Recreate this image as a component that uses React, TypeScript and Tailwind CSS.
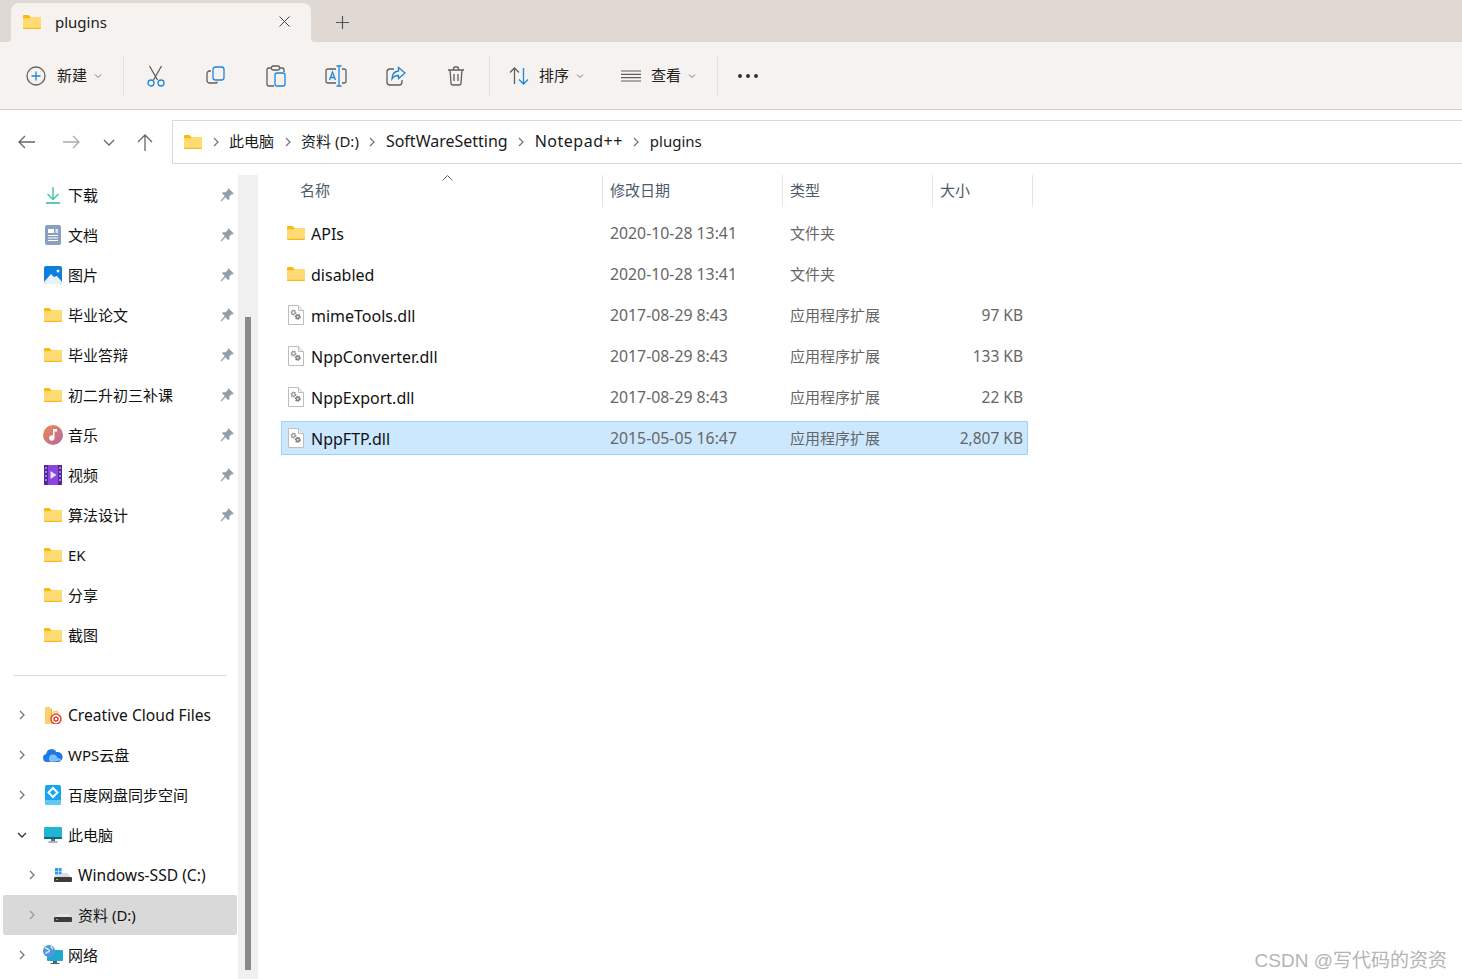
import { ReactNode } from "react"

const font = "font-['Noto_Sans','Noto_Sans_CJK_SC',sans-serif]"

// 文件夹图标
function FolderIcon() {
  return (
    <svg width="18" height="14" viewBox="0 0 18 14" className="shrink-0">
      <path d="M0 1.2C0 .5.5 0 1.2 0h4.2l2 2h9.4c.7 0 1.2.5 1.2 1.2V6H0z" fill="#ffb70f" />
      <path d="M0 3.2h6.6l1.4-1.2h8.8c.7 0 1.2.5 1.2 1.2v9.6c0 .7-.5 1.2-1.2 1.2H1.2C.5 14 0 13.500 0 12.800z" fill="#ffdc73" />
      <path d="M0 12.800V12.900C0 13.500.5 14 1.200 14h15.600c.7 0 1.200-.5 1.200-1.100v-.1z" fill="#f9b81d" />
    </svg>
  )
}

function DllIcon() {
  return (
    <svg width="16" height="20" viewBox="0 0 16 20" className="shrink-0">
      <path d="M.5.500h10l5 5v14H.500z" fill="#fff" stroke="#bdbdbd" />
      <path d="M10.500.500v5h5" fill="#efefef" stroke="#bdbdbd" />
      <circle cx="5.500" cy="7.500" r="2.200" fill="#c4c4c4" stroke="#909090" strokeWidth="1.400" strokeDasharray="1.400 .6" />
      <circle cx="5.500" cy="7.500" r=".8" fill="#fff" />
      <circle cx="9.800" cy="11.800" r="2.200" fill="#9a9a9a" stroke="#6c6c6c" strokeWidth="1.400" strokeDasharray="1.400 .6" />
      <circle cx="9.800" cy="11.800" r=".8" fill="#fff" />
    </svg>
  )
}

function PinIcon() {
  return (
    <svg width="14" height="14" viewBox="0 0 14 14">
      <path d="M8.500.300l5.200 5.200-1.100 1-.9-.3-2.400 2.400.1 2.500-1.100 1.100-2.800-2.900L1.300 13.500l-.8-.8 4.300-4.600L1.900 5.300l1.100-1.100 2.500.1 2.400-2.400-.4-.9z" fill="#949ea6" />
    </svg>
  )
}

function Chevron({ open, muted }: { open?: boolean; muted?: boolean }) {
  return (
    <svg width="10" height="10" viewBox="0 0 10 10" fill="none" stroke={open ? "#333" : muted ? "#999" : "#777"} strokeWidth="1.300">
      {open ? <path d="M1 3l4 4 4-4" /> : <path d="M3 1l4 4-4 4" />}
    </svg>
  )
}

function SmallCaret() {
  return (
    <svg width="8" height="6" viewBox="0 0 8 6" fill="none" stroke="#777" className="mt-px">
      <path d="M1 1.500l3 3 3-3" />
    </svg>
  )
}

function Separator() {
  return <div className="w-px h-10 bg-[#e3e0dd] shrink-0" />
}

const blue = "#1b86dc"
const dark = "#5f5f5f"

const toolIcons: ReactNode[] = [
  <svg key="cut" width="20" height="22" viewBox="0 0 20 22" fill="none" strokeWidth="1.300">
    <path d="M3.500 1l8 14M15.500 1l-8 14" stroke={dark} />
    <circle cx="5" cy="18" r="3" stroke={blue} />
    <circle cx="15" cy="18" r="3" stroke={blue} />
  </svg>,
  <svg key="copy" width="20" height="20" viewBox="0 0 20 20" fill="none" strokeWidth="1.300">
    <path d="M5 5H3.500A2.500 2.500 0 0 0 1 7.500v7A2.500 2.500 0 0 0 3.500 17h6a2.500 2.500 0 0 0 2-1" stroke={dark} />
    <rect x="7" y="1" width="11" height="13" rx="2.500" stroke={blue} />
  </svg>,
  <svg key="paste" width="20" height="22" viewBox="0 0 20 22" fill="none" strokeWidth="1.300">
    <path d="M5 3H3a2 2 0 0 0-2 2v14a2 2 0 0 0 2 2h5M14 3h2a2 2 0 0 1 2 2v2" stroke={dark} />
    <rect x="5.500" y="1" width="8" height="4" rx="1.500" stroke={dark} />
    <rect x="9" y="8" width="10" height="13" rx="2" stroke={blue} />
  </svg>,
  <svg key="rename" width="22" height="22" viewBox="0 0 22 22" fill="none" strokeWidth="1.300">
    <path d="M11 4H3a2 2 0 0 0-2 2v10a2 2 0 0 0 2 2h8M17 4h2a2 2 0 0 1 2 2v10a2 2 0 0 1-2 2h-2" stroke={dark} />
    <path d="M11.500 1h5M14 1v20M11.500 21h5M4.500 15l3-8 3 8M5.500 12.500h4" stroke={blue} />
  </svg>,
  <svg key="share" width="20" height="20" viewBox="0 0 20 20" fill="none" strokeWidth="1.300">
    <path d="M8 3H4a3 3 0 0 0-3 3v10a3 3 0 0 0 3 3h9a3 3 0 0 0 3-3v-2" stroke={dark} />
    <path d="M12.500 1.500L19 7l-6.500 5.500V9.500c-3 0-5 1-6.500 3.500 0-5 2.500-7.500 6.500-8z" stroke={blue} />
  </svg>,
  <svg key="delete" width="18" height="20" viewBox="0 0 18 20" fill="none" stroke={dark} strokeWidth="1.300">
    <path d="M1 4h16M6.500 4V2.500a1.500 1.500 0 0 1 1.500-1.500h2a1.500 1.500 0 0 1 1.500 1.500V4M3 4l1 13a2 2 0 0 0 2 2h6a2 2 0 0 0 2-2l1-13M7 8v7M11 8v7" />
  </svg>,
]

const nav: { label: string; icon: ReactNode; pin?: boolean }[] = [
  {
    label: "下载",
    pin: true,
    icon: (
      <svg width="18" height="18" viewBox="0 0 18 18" fill="none" strokeWidth="1.400">
        <path d="M9 1v12M3.500 8l5.500 5.500L14.500 8" stroke="#3fc7a5" />
        <path d="M2 17h14" stroke="#35b8b0" strokeWidth="1.600" />
      </svg>
    ),
  },
  {
    label: "文档",
    pin: true,
    icon: (
      <svg width="16" height="20" viewBox="0 0 16 20">
        <rect width="16" height="20" rx="2" fill="#8aa0bf" />
        <path d="M3 4h6v4H3zM3 10h10v1H3zM3 12.500h10v1H3zM3 15h10v1H3z" fill="#fff" />
        <path d="M10.500 4H13v4h-2.500z" fill="#dfe6f0" />
      </svg>
    ),
  },
  {
    label: "图片",
    pin: true,
    icon: (
      <svg width="18" height="18" viewBox="0 0 18 18">
        <rect width="18" height="18" rx="2" fill="#0f7fdc" />
        <path d="M0 16l7-8 3 3 3-1 5 6v0a2 2 0 0 1-2 2H2a2 2 0 0 1-2-2z" fill="#e8f3fc" />
        <circle cx="14" cy="5" r="1.500" fill="#e8f3fc" />
      </svg>
    ),
  },
  { label: "毕业论文", pin: true, icon: <FolderIcon /> },
  { label: "毕业答辩", pin: true, icon: <FolderIcon /> },
  { label: "初二升初三补课", pin: true, icon: <FolderIcon /> },
  {
    label: "音乐",
    pin: true,
    icon: (
      <svg width="20" height="20" viewBox="0 0 20 20">
        <defs>
          <linearGradient id="music" x1="0" y1="0" x2="1" y2="1">
            <stop offset="0" stopColor="#ee8a4f" />
            <stop offset="1" stopColor="#b865a5" />
          </linearGradient>
        </defs>
        <circle cx="10" cy="10" r="10" fill="url(#music)" />
        <path d="M10 4h4v2.500h-2.500V13a2.700 2.700 0 1 1-1.500-2.400z" fill="#fff" />
      </svg>
    ),
  },
  {
    label: "视频",
    pin: true,
    icon: (
      <svg width="18" height="20" viewBox="0 0 18 20">
        <rect width="18" height="20" rx="1.500" fill="#8a45dc" />
        <path d="M0 0h4v20H0zM14 0h4v20h-4z" fill="#54289a" />
        <path d="M1 2h2v2H1zM1 6h2v2H1zM1 10h2v2H1zM1 14h2v2H1zM15 2h2v2h-2zM15 6h2v2h-2zM15 10h2v2h-2zM15 14h2v2h-2z" fill="#a87ae8" />
        <path d="M6.500 6l6 4-6 4z" fill="#e9e0fb" />
      </svg>
    ),
  },
  { label: "算法设计", pin: true, icon: <FolderIcon /> },
  { label: "EK", icon: <FolderIcon /> },
  { label: "分享", icon: <FolderIcon /> },
  { label: "截图", icon: <FolderIcon /> },
]

const places: { label: string; indent?: boolean; open?: boolean; active?: boolean; latin?: boolean; icon: ReactNode }[] = [
  {
    label: "Creative Cloud Files",
    latin: true,
    icon: (
      <svg width="20" height="18" viewBox="0 0 20 18">
        <path d="M2 1h5l1 2v15H2z" fill="#f8d26b" />
        <path d="M8 3h1v15H8z" fill="#e9b84a" />
        <path d="M9 7c3-2 5-2 6 0" fill="none" stroke="#f8d26b" strokeWidth="2" />
        <circle cx="13" cy="13" r="5" fill="#fff" stroke="#e0452f" strokeWidth="1.500" />
        <circle cx="13" cy="13" r="2" fill="none" stroke="#e0452f" strokeWidth="1.500" />
      </svg>
    ),
  },
  {
    label: "WPS云盘",
    icon: (
      <svg width="20" height="14" viewBox="0 0 20 14">
        <path d="M4 14a4 4 0 0 1-.8-7.900A5.500 5.500 0 0 1 13.500 4 5 5 0 0 1 15.500 14z" fill="#1f78e6" />
        <path d="M8 14a4 4 0 0 1 2-7.500c2.500 0 4 1.500 4.500 3.500 2-.5 3.500 1 3.500 2.500z" fill="#7cc2f7" />
      </svg>
    ),
  },
  {
    label: "百度网盘同步空间",
    icon: (
      <svg width="16" height="20" viewBox="0 0 16 20">
        <rect width="16" height="20" rx="2" fill="#17a5ef" />
        <path d="M8 3l4.500 4.500L8 12 3.500 7.500z" fill="none" stroke="#fff" strokeWidth="2" />
        <path d="M0 15h16v3a2 2 0 0 1-2 2H2a2 2 0 0 1-2-2z" fill="#63c8f6" />
      </svg>
    ),
  },
  {
    label: "此电脑",
    open: true,
    icon: (
      <svg width="18" height="16" viewBox="0 0 18 16">
        <rect width="18" height="12" rx="1" fill="#21b5d5" />
        <path d="M0 10h18v1a1 1 0 0 1-1 1H1a1 1 0 0 1-1-1z" fill="#14667c" />
        <path d="M7 12h4v2H7zM4.500 14.500h9v1h-9z" fill="#556b78" />
      </svg>
    ),
  },
  {
    label: "Windows-SSD (C:)",
    indent: true,
    latin: true,
    icon: (
      <svg width="18" height="16" viewBox="0 0 18 16">
        <path d="M1 1h3v3H1zM4.600 1h3v3h-3zM1 4.600h3v3H1zM4.600 4.600h3v3h-3z" fill="#2a9fe8" />
        <path d="M8 6h5l4 4H1V8.200h7z" fill="#dcdcdc" />
        <rect y="10" width="18" height="5" rx="1" fill="#3c3c3c" />
        <path d="M2 12h2v1H2z" fill="#4fd06a" />
      </svg>
    ),
  },
  {
    label: "资料 (D:)",
    indent: true,
    active: true,
    icon: (
      <svg width="18" height="16" viewBox="0 0 18 16">
        <path d="M4 7h10l3 3H1z" fill="#e6e6e6" />
        <rect y="10" width="18" height="5" rx="1" fill="#3c3c3c" />
        <path d="M2 12h2v1H2z" fill="#4fd06a" />
      </svg>
    ),
  },
  {
    label: "网络",
    icon: (
      <svg width="20" height="20" viewBox="0 0 20 20">
        <rect x="4" y="5" width="16" height="11" rx="1" fill="#1fa9cf" />
        <path d="M10 16h4v2h-4zM7.500 18h9v1h-9z" fill="#4a6272" />
        <circle cx="6" cy="6" r="6" fill="#4f97d8" />
        <path d="M2 3c2 0 3 1 4 2s0 2-1 2-2 1-2 2M8 1c0 2 1 2 2 3" fill="none" stroke="#d8ecf8" strokeWidth="1.300" />
      </svg>
    ),
  },
]

const files: { name: string; date: string; type: string; size?: string; folder?: boolean; selected?: boolean }[] = [
  { name: "APIs", date: "2020-10-28 13:41", type: "文件夹", folder: true },
  { name: "disabled", date: "2020-10-28 13:41", type: "文件夹", folder: true },
  { name: "mimeTools.dll", date: "2017-08-29 8:43", type: "应用程序扩展", size: "97 KB" },
  { name: "NppConverter.dll", date: "2017-08-29 8:43", type: "应用程序扩展", size: "133 KB" },
  { name: "NppExport.dll", date: "2017-08-29 8:43", type: "应用程序扩展", size: "22 KB" },
  { name: "NppFTP.dll", date: "2015-05-05 16:47", type: "应用程序扩展", size: "2,807 KB", selected: true },
]

const crumbs = ["此电脑", "资料 (D:)", "SoftWareSetting", "Notepad++", "plugins"]

function NavRow({ icon, label, pin }: { icon: ReactNode; label: string; pin?: boolean }) {
  return (
    <div className="h-10 flex items-center pl-[40px] pr-[3px]">
      <div className="w-5 flex justify-center shrink-0">{icon}</div>
      <span className="ml-[5px] flex-1 text-[15px] text-[#111]">{label}</span>
      {pin && <PinIcon />}
    </div>
  )
}

export default function App() {
  return (
    <div className={`${font} relative w-[1462px] h-[979px] overflow-hidden bg-white flex flex-col`}>
      {/* 标签栏 */}
      <div className="h-[42px] bg-[#e0d8d3] flex items-end pl-[11px] shrink-0">
        <div className="relative w-[300px] h-[39px] bg-[#f5f2ef] rounded-t-lg flex items-center pl-3 pr-[21px] pb-[2px]">
          <FolderIcon />
          <span className="ml-[14px] mt-[2px] flex-1 text-[15px] text-[#1a1a1a]">plugins</span>
          <svg width="11" height="11" viewBox="0 0 11 11" stroke="#444" strokeWidth="1">
            <path d="M.5.500l10 10M10.500.500l-10 10" />
          </svg>
          <svg width="4" height="4" viewBox="0 0 4 4" className="absolute -left-[4px] bottom-0">
            <path d="M4 0v4H0a4 4 0 0 0 4-4z" fill="#f5f2ef" />
          </svg>
          <svg width="4" height="4" viewBox="0 0 4 4" className="absolute -right-[4px] bottom-0">
            <path d="M0 0v4h4a4 4 0 0 1-4-4z" fill="#f5f2ef" />
          </svg>
        </div>
        <div className="w-[62px] h-[39px] flex items-center justify-center">
          <svg width="13" height="13" viewBox="0 0 13 13" stroke="#555" strokeWidth="1.200">
            <path d="M6.500 0v13M0 6.500h13" />
          </svg>
        </div>
      </div>

      {/* 工具栏 */}
      <div className="h-[68px] bg-[#f5f2ef] border-b border-[#d2cfcd] flex items-center shrink-0">
        <div className="w-[123px] flex items-center pl-[26px] shrink-0">
          <svg width="20" height="20" viewBox="0 0 20 20" fill="none" strokeWidth="1.300">
            <circle cx="10" cy="10" r="9" stroke={dark} />
            <path d="M10 5.500v9M5.500 10h9" stroke={blue} />
          </svg>
          <span className="ml-[11px] mr-[7px] text-[15px] leading-none text-[#222]">新建</span>
          <SmallCaret />
        </div>
        <Separator />
        <div className="flex shrink-0 pl-[2px]">
          {toolIcons.map((icon, i) => (
            <div key={i} className="w-[60px] flex justify-center items-center">
              {icon}
            </div>
          ))}
        </div>
        <div className="w-[3px] shrink-0" />
        <Separator />
        <div className="w-[114px] flex items-center pl-[19px] shrink-0">
          <svg width="20" height="18" viewBox="0 0 20 18" fill="none" strokeWidth="1.300">
            <path d="M5.500 17V1M1 5.500L5.500 1 10 5.500" stroke={dark} />
            <path d="M14.500 1v16M10 12.500l4.500 4.500 4.500-4.500" stroke={blue} />
          </svg>
          <span className="ml-[10px] mr-[7px] text-[15px] leading-none text-[#222]">排序</span>
          <SmallCaret />
        </div>
        <div className="w-[113px] flex items-center pl-[17px] shrink-0">
          <svg width="20" height="12" viewBox="0 0 20 12" fill="none" stroke={dark} strokeWidth="1.200">
            <path d="M0 1h20M0 4.300h20M0 7.600h20M0 11h20" />
          </svg>
          <span className="ml-[10px] mr-[7px] text-[15px] leading-none text-[#222]">查看</span>
          <SmallCaret />
        </div>
        <Separator />
        <div className="flex gap-[4px] pl-[20px]">
          <div className="w-[4px] h-[4px] rounded-full bg-[#333]" />
          <div className="w-[4px] h-[4px] rounded-full bg-[#333]" />
          <div className="w-[4px] h-[4px] rounded-full bg-[#333]" />
        </div>
      </div>

      {/* 地址栏 */}
      <div className="h-[65px] flex items-start pt-[10px] shrink-0">
        <div className="w-[172px] h-11 flex items-center pl-[18px] shrink-0">
          <svg width="17" height="14" viewBox="0 0 17 14" fill="none" stroke="#666" strokeWidth="1.300">
            <path d="M17 7H1M7 1L1 7l6 6" />
          </svg>
          <svg width="17" height="14" viewBox="0 0 17 14" fill="none" stroke="#aaa" strokeWidth="1.300" className="ml-[28px]">
            <path d="M0 7h16M10 1l6 6-6 6" />
          </svg>
          <svg width="12" height="7" viewBox="0 0 12 7" fill="none" stroke="#666" strokeWidth="1.300" className="ml-[23px]">
            <path d="M1 1l5 5 5-5" />
          </svg>
          <svg width="16" height="17" viewBox="0 0 16 17" fill="none" stroke="#666" strokeWidth="1.300" className="ml-[22px]">
            <path d="M8 17V1M1 8l7-7 7 7" />
          </svg>
        </div>
        <div className="flex-1 h-11 border border-r-0 border-[#d9d9d9] flex items-center pl-[11px]">
          <FolderIcon />
          {crumbs.map((c) => (
            <div key={c} className="flex items-center">
              <div className="w-[27px] flex justify-center">
                <Chevron />
              </div>
              <span
                className={`${c === "SoftWareSetting" || c === "Notepad++" ? "text-[16px]" : "text-[15px]"} text-[#1a1a1a] whitespace-nowrap -mt-[2px] ${c === "Notepad++" ? "tracking-[0.5px]" : ""}`}
              >
                {c}
              </span>
            </div>
          ))}
        </div>
      </div>

      {/* 主体 */}
      <div className="flex-1 flex min-h-0">
        <div className="w-[238px] shrink-0 pl-[3px] pr-px">
          {nav.map((n) => (
            <NavRow key={n.label} {...n} />
          ))}
          <div className="h-10 flex items-center pl-[10px] pr-[10px]">
            <div className="h-px w-full bg-[#dcdcdc]" />
          </div>
          {places.map((p) => (
            <div
              key={p.label}
              className={`h-10 flex items-center rounded-[2px] ${p.active ? "bg-[#d9d9d9]" : ""} ${p.indent ? "pl-[24px]" : "pl-[14px]"}`}
            >
              <div className="w-[10px] flex justify-center shrink-0">
                <Chevron open={p.open} muted={p.active} />
              </div>
              <div className="w-5 ml-[16px] flex justify-center shrink-0">{p.icon}</div>
              <span className={`ml-[5px] ${p.latin ? "text-[15.600px] mt-[2px]" : "text-[15px]"} text-[#111] whitespace-nowrap`}>{p.label}</span>
            </div>
          ))}
        </div>
        {/* 滚动条 */}
        <div className="w-5 h-full bg-[#f0f0f0] shrink-0 flex flex-col items-center pt-[142px] pb-[9px]">
          <div className="w-[6px] flex-1 bg-[#8a8a8a]" />
        </div>

        {/* 文件列表 */}
        <div className="flex-1 pl-[23px]">
          <div className="relative h-8 flex text-[15px] text-[#4c5a6b]">
            <div className="w-[322px] border-r border-[#e5e5e5] pl-[19px] pb-px flex items-center">名称</div>
            <div className="w-[180px] border-r border-[#e5e5e5] pl-[7px] pb-px flex items-center">修改日期</div>
            <div className="w-[150px] border-r border-[#e5e5e5] pl-[7px] pb-px flex items-center">类型</div>
            <div className="w-[100px] border-r border-[#e5e5e5] pl-[7px] pb-px flex items-center">大小</div>
            <svg width="11" height="6" viewBox="0 0 11 6" fill="none" stroke="#666" className="absolute left-[161px] top-0">
              <path d="M.5 5.500l5-5 5 5" />
            </svg>
          </div>
          <div className="mt-[9px] w-[747px] flex flex-col gap-[7px]">
            {files.map((f) => (
              <div
                key={f.name}
                className={`h-[34px] grid grid-cols-[328px_180px_1fr_auto] items-center border rounded-[1px] pr-1 ${
                  f.selected ? "bg-[#cce8ff] border-[#99d1ff]" : "border-transparent"
                }`}
              >
                <div className="flex items-center">
                  <div className="w-7 flex justify-center shrink-0">{f.folder ? <FolderIcon /> : <DllIcon />}</div>
                  <span className="ml-[1px] mt-[2px] text-[16px] text-[#111]">{f.name}</span>
                </div>
                <span className="mt-[2px] text-[15.800px] text-[#666]">{f.date}</span>
                <span className="text-[15px] text-[#666]">{f.type}</span>
                <span className="mt-[2px] text-[15.500px] text-[#666] text-right">{f.size}</span>
              </div>
            ))}
          </div>
        </div>
      </div>

      {/* 水印 */}
      <div className="absolute right-[15px] bottom-[4px] text-[19px] text-[#b4b4b4] font-['Liberation_Sans','Noto_Sans_CJK_SC',sans-serif]">
        CSDN @写代码的资资
      </div>
    </div>
  )
}
